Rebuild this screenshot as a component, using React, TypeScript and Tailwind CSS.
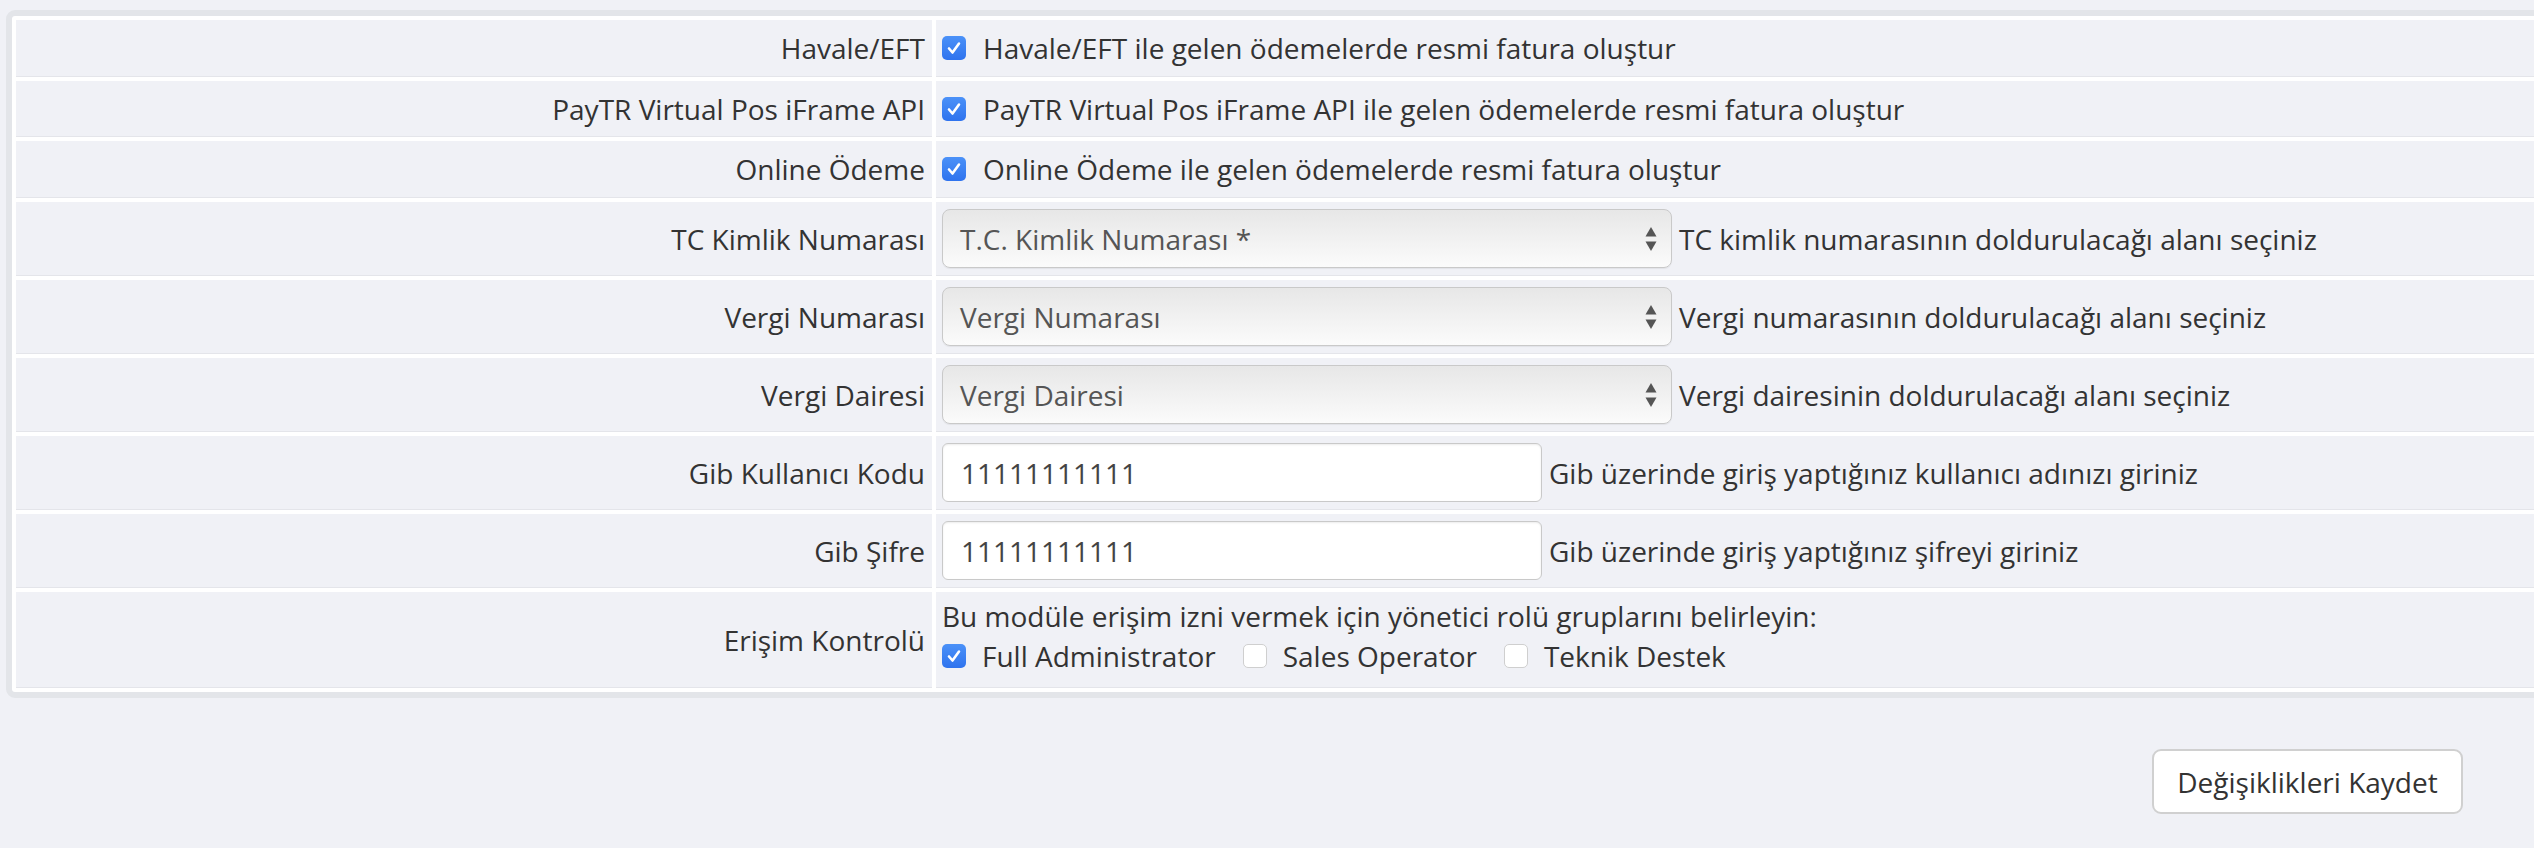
import { useState } from 'react';

const FONT = "font-['Open_Sans',sans-serif]";

const PAYMENTS = ['Havale/EFT', 'PayTR Virtual Pos iFrame API', 'Online Ödeme'];
const ROW_H = ['h-[57px]', 'h-[56px]', 'h-[57px]'];

const SELECTS = [
  { label: 'TC Kimlik Numarası', value: 'T.C. Kimlik Numarası *', hint: 'TC kimlik numarasının doldurulacağı alanı seçiniz' },
  { label: 'Vergi Numarası', value: 'Vergi Numarası', hint: 'Vergi numarasının doldurulacağı alanı seçiniz' },
  { label: 'Vergi Dairesi', value: 'Vergi Dairesi', hint: 'Vergi dairesinin doldurulacağı alanı seçiniz' },
];

const INPUTS = [
  { label: 'Gib Kullanıcı Kodu', value: '11111111111', hint: 'Gib üzerinde giriş yaptığınız kullanıcı adınızı giriniz' },
  { label: 'Gib Şifre', value: '11111111111', hint: 'Gib üzerinde giriş yaptığınız şifreyi giriniz' },
];

const ROLES = [
  { name: 'Full Administrator', on: true },
  { name: 'Sales Operator', on: false },
  { name: 'Teknik Destek', on: false },
];

export default function App() {
  const [roles, setRoles] = useState(ROLES);

  return (
    <div className={`min-h-screen w-full overflow-hidden bg-[#f0f1f6] pt-[10px] text-[28px] text-[#333] ${FONT}`}>
      <div className="ml-[6px] w-[2600px] rounded-[9px] border-[6px] border-[#e3e5e9] bg-white p-[4px]">
        <div className="flex flex-col gap-[4px]">
          {PAYMENTS.map((p, i) => (
            <Row key={p} label={p} h={ROW_H[i]}>
              <Check on />
              <span className="ml-[17px]">{p} ile gelen ödemelerde resmi fatura oluştur</span>
            </Row>
          ))}

          {SELECTS.map((s) => (
            <Row key={s.label} label={s.label} h="h-[74px]">
              <div
                role="combobox"
                className="relative flex h-[59px] w-[730px] items-center rounded-[8px] border border-[#c9c9c9] bg-gradient-to-b from-[#e7e7e7] to-[#fbfbfb] pl-[17px] text-[#555] shadow-[0_1px_1px_rgba(0,0,0,0.06)]"
              >
                {s.value}
                <svg className="absolute right-[14px] top-[17px]" width="12" height="24" viewBox="0 0 12 24">
                  <path d="M6 0 L11.5 9.5 L0.5 9.5 Z" fill="#555" />
                  <path d="M6 24 L11.5 14.5 L0.5 14.5 Z" fill="#555" />
                </svg>
              </div>
              <span className="ml-[7px]">{s.hint}</span>
            </Row>
          ))}

          {INPUTS.map((f) => (
            <Row key={f.label} label={f.label} h="h-[74px]">
              <input
                defaultValue={f.value}
                className="h-[59px] w-[600px] rounded-[6px] border border-[#c9c9c9] bg-white pl-[18px] text-[28px] text-[#444] shadow-[inset_0_1px_2px_rgba(0,0,0,0.08)] outline-none"
              />
              <span className="ml-[7px]">{f.hint}</span>
            </Row>
          ))}

          <Row label="Erişim Kontrolü" h="h-[96px]">
            <div className="flex flex-col pb-[7px]">
              <p className="leading-[40px]">Bu modüle erişim izni vermek için yönetici rolü gruplarını belirleyin:</p>
              <div className="flex h-[40px] items-center">
                {roles.map((r, i) => (
                  <label
                    key={r.name}
                    className={`flex cursor-pointer items-center ${i > 0 ? 'ml-[27px]' : ''}`}
                    onClick={() => setRoles(roles.map((x) => (x.name === r.name ? { ...x, on: !x.on } : x)))}
                  >
                    <Check on={r.on} />
                    <span className="ml-[16px]">{r.name}</span>
                  </label>
                ))}
              </div>
            </div>
          </Row>
        </div>
      </div>

      <div className="mt-[51px] flex justify-end pr-[71px]">
        <button className="h-[65px] w-[311px] rounded-[9px] border-2 border-[#d0d0d0] bg-white text-[28px] text-[#333]">
          Değişiklikleri Kaydet
        </button>
      </div>
    </div>
  );
}

function Row({ label, h, children }: { label: string; h: string; children: React.ReactNode }) {
  return (
    <div className={`grid grid-cols-[916px_1fr] gap-x-[4px] ${h}`}>
      <div className="flex items-center justify-end border-b border-[#e4e5ea] bg-[#f0f1f6] pr-[7px] whitespace-nowrap">
        {label}
      </div>
      <div className="flex items-center border-b border-[#e4e5ea] bg-[#f0f1f6] pl-[6px] whitespace-nowrap">
        {children}
      </div>
    </div>
  );
}

function Check({ on = false }: { on?: boolean }) {
  if (!on) {
    return <span className="block h-[24px] w-[24px] shrink-0 rounded-[5px] border border-[#cfcfcf] bg-white" />;
  }
  return (
    <span className="flex h-[24px] w-[24px] shrink-0 items-center justify-center rounded-[5px] bg-gradient-to-b from-[#4b91f8] to-[#2f73ee]">
      <svg width="16" height="16" viewBox="0 0 16 16">
        <path d="M3 8.5 L6.5 12.5 L13 3.5" fill="none" stroke="white" strokeWidth="2.6" strokeLinecap="round" strokeLinejoin="round" />
      </svg>
    </span>
  );
}
